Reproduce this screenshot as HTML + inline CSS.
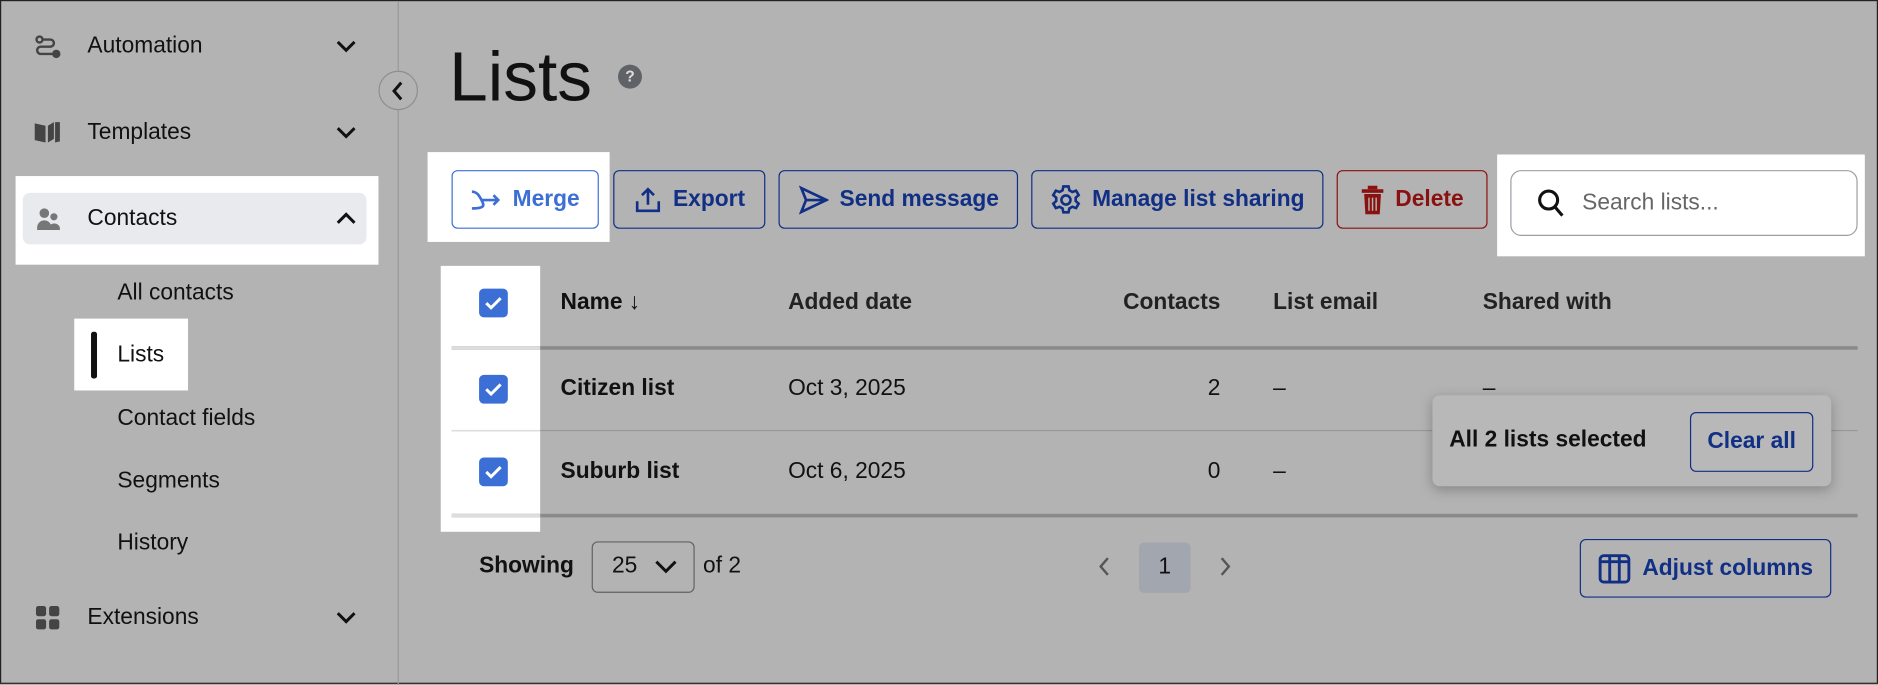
<!DOCTYPE html><html><head><meta charset="utf-8"><style>
*{box-sizing:border-box;margin:0;padding:0}
html,body{width:1878px;height:684px;overflow:hidden;background:#b3b3b3}
#s{position:absolute;left:0;top:0;width:1568px;height:571px;transform:scale(1.19770);transform-origin:0 0;font-family:"Liberation Sans",sans-serif;color:#111;border:1px solid #222;background:#b3b3b3}
.a{position:absolute}
.t{position:absolute;font-size:19px;line-height:22px;white-space:nowrap}
.w{position:absolute;background:#fff}
.btn{position:absolute;top:141px;height:49px;border:1.5px solid #102f85;border-radius:5px;color:#102f85;font-weight:bold;font-size:19px;display:flex;align-items:center;justify-content:center;gap:9px}
.h{font-weight:bold;color:#222}
.cb{position:absolute;left:399px;width:24px;height:24px;background:#3b6fd6;border-radius:4px}
</style></head><body><div id="s">
<div class="a" style="left:331px;top:0;width:1px;height:571px;background:#999"></div>
<svg class="a" style="left:27px;top:28px" width="24" height="22" viewBox="0 0 24 22" fill="none" stroke="#444" stroke-width="2"><circle cx="5" cy="4" r="2.5"/><path d="M8 4h6a3 3 0 0 1 0 6H6a3 3 0 0 0 0 6h10"/><circle cx="19" cy="16" r="2.5" fill="#444"/></svg>
<div class="t" style="left:72px;top:27px">Automation</div>
<svg class="a" style="left:279px;top:32px" width="18" height="12"><path d="M2 2l7 7 7-7" stroke="#111" stroke-width="2.5" fill="none"/></svg>
<svg class="a" style="left:27px;top:99px" width="24" height="20"><path d="M1 3l9 2v14l-9-2zM12 5l5-3v14l-5 3zM18 2h4v16l-4 1z" fill="#444"/></svg>
<div class="t" style="left:72px;top:99px">Templates</div>
<svg class="a" style="left:279px;top:104px" width="18" height="12"><path d="M2 2l7 7 7-7" stroke="#111" stroke-width="2.5" fill="none"/></svg>
<div class="w" style="left:12px;top:146px;width:303px;height:74px"></div>
<div class="a" style="left:18px;top:160px;width:287px;height:43px;background:#e8eaed;border-radius:6px"></div>
<svg class="a" style="left:29px;top:172px" width="22" height="20"><circle cx="7" cy="5" r="4" fill="#777"/><circle cx="15" cy="8" r="3" fill="#777"/><path d="M1 17a6 6 0 0 1 12 0v2H1zM11 19v-3a5 5 0 0 1 9 1v2z" fill="#777"/></svg>
<div class="t" style="left:72px;top:171px">Contacts</div>
<svg class="a" style="left:279px;top:175px" width="18" height="12"><path d="M2 10l7-7 7 7" stroke="#111" stroke-width="2.5" fill="none"/></svg>
<div class="t" style="left:97px;top:233px">All contacts</div>
<div class="w" style="left:61px;top:265px;width:95px;height:60px"></div>
<div class="a" style="left:75px;top:276px;width:5px;height:39px;background:#111;border-radius:2px"></div>
<div class="t" style="left:97px;top:285px">Lists</div>
<div class="t" style="left:97px;top:338px">Contact fields</div>
<div class="t" style="left:97px;top:390px">Segments</div>
<div class="t" style="left:97px;top:442px">History</div>
<svg class="a" style="left:29px;top:505px" width="20" height="20" fill="#444"><rect x="0" y="0" width="8.5" height="8.5" rx="2"/><rect x="11" y="0" width="8.5" height="8.5" rx="2"/><rect x="0" y="11" width="8.5" height="8.5" rx="2"/><rect x="11" y="11" width="8.5" height="8.5" rx="2"/></svg>
<div class="t" style="left:72px;top:504px">Extensions</div>
<svg class="a" style="left:279px;top:509px" width="18" height="12"><path d="M2 2l7 7 7-7" stroke="#111" stroke-width="2.5" fill="none"/></svg>
<div class="a" style="left:315px;top:58px;width:33px;height:33px;border:1px solid #8e8e8e;border-radius:50%;background:#b3b3b3"></div>
<svg class="a" style="left:324px;top:66px" width="14" height="18"><path d="M10 2L4 9l6 7" stroke="#111" stroke-width="2.5" fill="none"/></svg>
<div class="t" style="left:374px;top:32px;font-size:58px;line-height:64px;color:#111">Lists</div>
<div class="a" style="left:515px;top:53px;width:20px;height:20px;border-radius:50%;background:#5f6368;color:#ddd;font-size:13px;font-weight:bold;text-align:center;line-height:20px">?</div>
<div class="w" style="left:356px;top:126px;width:152px;height:75px"></div>
<div class="btn" style="left:376px;width:123px;border-color:#3b6fd6;border-width:1px;color:#3b6fd6"><svg width="26" height="20" fill="none" stroke="#3b6fd6" stroke-width="2.2"><path d="M1 3c4 0 6 3 8 7s4 7 -8 7" /><path d="M9 10h14M19 6l4 4-4 4"/></svg>Merge</div>
<div class="btn" style="left:511px;width:127px"><svg width="24" height="24" fill="none" stroke="#102f85" stroke-width="2.2"><path d="M12 16V3M7 8l5-5 5 5M3 13v8h18v-8"/></svg>Export</div>
<div class="btn" style="left:649px;width:200px"><svg width="26" height="24" fill="none" stroke="#102f85" stroke-width="2.2"><path d="M3 2l21 10L3 22l4-10zM7 12h17"/></svg>Send message</div>
<div class="btn" style="left:860px;width:244px"><svg width="26" height="26" viewBox="0 0 24 24" fill="none" stroke="#102f85" stroke-width="2"><circle cx="12" cy="12" r="3.5"/><path d="M10 1.5h4l.6 3 2.3 1.3 2.9-1 2 3.4-2.3 2v2.6l2.3 2-2 3.4-2.9-1-2.3 1.3-.6 3h-4l-.6-3-2.3-1.3-2.9 1-2-3.4 2.3-2v-2.6l-2.3-2 2-3.4 2.9 1 2.3-1.3z"/></svg>Manage list sharing</div>
<div class="btn" style="left:1115px;width:126px;border-color:#8b1111;color:#8b1111"><svg width="20" height="24" fill="#8b1111"><rect x="6" y="0" width="8" height="3"/><rect x="1" y="3" width="18" height="3"/><path d="M3 7h14l-1 17H4z"/><path d="M7 10v11M10 10v11M13 10v11" stroke="#b3b3b3" stroke-width="1.2"/></svg>Delete</div>
<div class="w" style="left:1249px;top:128px;width:307px;height:85px"></div>
<div class="a" style="left:1260px;top:141px;width:290px;height:55px;border:1px solid #9aa0a6;border-radius:9px"></div>
<svg class="a" style="left:1282px;top:156px" width="24" height="26" fill="none" stroke="#111" stroke-width="2.6"><circle cx="10" cy="10" r="7.5"/><path d="M15.5 16l6 7"/></svg>
<div class="t" style="left:1320px;top:158px;color:#666">Search lists...</div>
<div class="w" style="left:367px;top:221px;width:83px;height:222px"></div>
<div class="a" style="left:376px;top:288px;width:1174px;height:3px;background:#8a8a8a"></div>
<div class="a" style="left:376px;top:358px;width:1174px;height:1px;background:#999"></div>
<div class="a" style="left:376px;top:428px;width:1174px;height:3px;background:#8a8a8a"></div>
<div class="a" style="left:376px;top:288px;width:74px;height:3px;background:#ddd"></div>
<div class="a" style="left:376px;top:358px;width:74px;height:1px;background:#ddd"></div>
<div class="a" style="left:376px;top:428px;width:74px;height:3px;background:#ddd"></div>
<div class="cb" style="top:240px"></div><div class="cb" style="top:312px"></div><div class="cb" style="top:381px"></div>
<svg class="a" style="left:399px;top:240px" width="24" height="24"><path d="M6 12l4 4 8-8" stroke="#fff" stroke-width="2.5" fill="none"/></svg>
<svg class="a" style="left:399px;top:312px" width="24" height="24"><path d="M6 12l4 4 8-8" stroke="#fff" stroke-width="2.5" fill="none"/></svg>
<svg class="a" style="left:399px;top:381px" width="24" height="24"><path d="M6 12l4 4 8-8" stroke="#fff" stroke-width="2.5" fill="none"/></svg>
<div class="t" style="left:467px;top:241px;font-weight:bold">Name ↓</div>
<div class="t h" style="left:657px;top:241px">Added date</div>
<div class="t h" style="left:918px;top:241px;width:100px;text-align:right">Contacts</div>
<div class="t h" style="left:1062px;top:241px">List email</div>
<div class="t h" style="left:1237px;top:241px">Shared with</div>
<div class="t" style="left:467px;top:313px;font-weight:bold">Citizen list</div>
<div class="t" style="left:657px;top:313px">Oct 3, 2025</div>
<div class="t" style="left:918px;top:313px;width:100px;text-align:right">2</div>
<div class="t" style="left:1062px;top:313px">–</div>
<div class="t" style="left:1237px;top:313px">–</div>
<div class="t" style="left:467px;top:382px;font-weight:bold">Suburb list</div>
<div class="t" style="left:657px;top:382px">Oct 6, 2025</div>
<div class="t" style="left:918px;top:382px;width:100px;text-align:right">0</div>
<div class="t" style="left:1062px;top:382px">–</div>
<div class="a" style="left:1195px;top:329px;width:333px;height:76px;background:#b8b8b8;border-radius:6px;box-shadow:0 3px 10px rgba(0,0,0,.25)"></div>
<div class="t" style="left:1209px;top:356px;font-weight:bold">All 2 lists selected</div>
<div class="btn" style="left:1410px;top:343px;height:50px;width:103px;border-width:1px">Clear all</div>
<div class="t" style="left:399px;top:461px;font-weight:bold">Showing</div>
<div class="a" style="left:493px;top:451px;width:86px;height:43px;border:1px solid #5f6368;border-radius:5px"></div>
<div class="t" style="left:510px;top:461px">25</div>
<svg class="a" style="left:545px;top:466px" width="20" height="14"><path d="M2 2l8 8 8-8" stroke="#111" stroke-width="2.5" fill="none"/></svg>
<div class="t" style="left:586px;top:461px">of 2</div>
<svg class="a" style="left:914px;top:462px" width="14" height="20"><path d="M10 3L4 10l6 7" stroke="#555" stroke-width="2" fill="none"/></svg>
<div class="a" style="left:950px;top:452px;width:43px;height:42px;background:#a2a6ae;border-radius:4px"></div>
<div class="t" style="left:950px;top:462px;width:43px;text-align:center">1</div>
<svg class="a" style="left:1015px;top:462px" width="14" height="20"><path d="M4 3l6 7-6 7" stroke="#555" stroke-width="2" fill="none"/></svg>
<div class="btn" style="left:1318px;top:449px;width:210px;border-width:1px"><svg width="28" height="26" fill="none" stroke="#102f85" stroke-width="2.4"><rect x="2" y="2" width="24" height="22" rx="3"/><path d="M10 2v22M18 2v22M2 7h24"/></svg>Adjust columns</div>
</div></body></html>
